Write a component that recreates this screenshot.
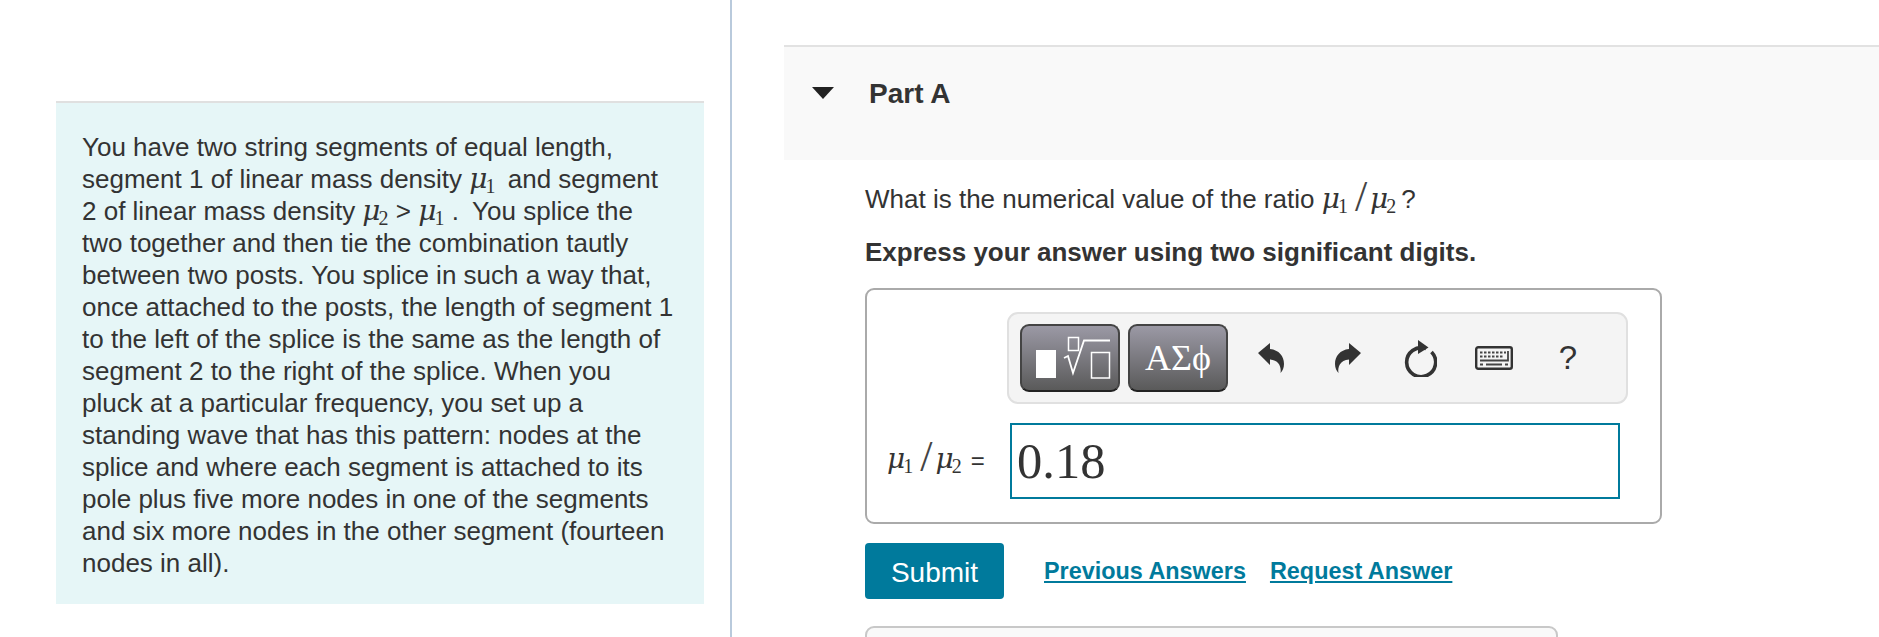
<div class="page">
  <aside class="left">
    <div class="intro">
      <p class="intro-text">You have two string segments of equal length,<br />segment 1 of linear mass density <span class="m after"><i>μ</i><sub>1</sub></span> and segment<br />2 of linear mass density <span class="m"><i>μ</i><sub>2</sub></span> &gt; <span class="m"><i>μ</i><sub>1</sub></span> . <span class="after-dot">You splice the</span><br />two together and then tie the combination tautly<br />between two posts. You splice in such a way that,<br />once attached to the posts, the length of segment 1<br />to the left of the splice is the same as the length of<br />segment 2 to the right of the splice. When you<br />pluck at a particular frequency, you set up a<br />standing wave that has this pattern: nodes at the<br />splice and where each segment is attached to its<br />pole plus five more nodes in one of the segments<br />and six more nodes in the other segment (fourteen<br />nodes in all).</p>
    </div>
  </aside>

  <main class="right">
    <header class="part">
      <svg class="caret" viewBox="0 0 22 12" width="22" height="12"><path d="M0 0H22L11 12Z" fill="#222" /></svg>
      <h2>Part A</h2>
    </header>
    <div class="body">
      <p class="q">What is the numerical value of the ratio <span class="m"><i>μ</i><sub>1</sub><span class="slash">/</span><i>μ</i><sub>2</sub></span><span class="qm">?</span></p>
      <p class="ex">Express your answer using two significant digits.</p>

      <section class="answer">
        <div class="toolbar">
          <button class="tpl" aria-label="templates">
            <svg viewBox="0 0 96 64" width="96" height="64" fill="none" stroke="#fff" stroke-width="1.500">
              <rect x="14" y="24" width="20" height="28" fill="#fff" stroke="none" />
              <rect x="46.500" y="11.500" width="10" height="13" />
              <path d="M42 32l4 -2 5 17 11 -32.500H88" stroke-width="1.800" />
              <rect x="69.500" y="26.500" width="18" height="25.500" />
            </svg>
          </button>
          <button class="tpl sym">ΑΣϕ</button>
          <span class="tool t1">
            <svg viewBox="0 0 28 32" width="28" height="32"><path d="M1 11L13 1V7C22 8 27 14 27 22C27 26 25.500 29 23.500 31C24.500 25 22 18 13 17.500V23Z" fill="#333" /></svg>
          </span>
          <span class="tool t2">
            <svg viewBox="0 0 28 32" width="28" height="32"><path d="M27 11L15 1V7C6 8 1 14 1 22C1 26 2.500 29 4.500 31C3.500 25 6 18 15 17.500V23Z" fill="#333" /></svg>
          </span>
          <span class="tool t3">
            <svg viewBox="0 0 34 38" width="34" height="38"><path d="M23 9.500A14.500 14.500 0 1 0 28.500 13" fill="none" stroke="#333" stroke-width="3.600" /><path d="M15 1L25.500 8.500L15 15Z" fill="#333" /></svg>
          </span>
          <span class="tool t4">
            <svg viewBox="0 0 38 24" width="38" height="24">
              <rect x="1.200" y="1.200" width="35.600" height="21.600" rx="2" fill="#f4f4f4" stroke="#333" stroke-width="2.400" />
              <path d="M5 6.500h26M5 10.500h24" fill="none" stroke="#444" stroke-width="1.800" stroke-dasharray="2.500 1.500" />
              <path d="M33 5v9.500H5" fill="none" stroke="#444" stroke-width="1.800" />
              <path d="M5 18.500h3M11 18.500h16M30 18.500h3" fill="none" stroke="#444" stroke-width="2" />
            </svg>
          </span>
          <span class="tool help">?</span>
        </div>
        <div class="row">
          <span class="label"><span class="m big"><i>μ</i><sub>1</sub><span class="slash">/</span><i>μ</i><sub>2</sub></span><span class="eq">=</span></span>
          <div class="input">0.18</div>
        </div>
      </section>

      <div class="actions">
        <button class="submit">Submit</button>
        <a href="#a">Previous Answers</a>
        <a href="#b">Request Answer</a>
      </div>

      <div class="next"></div>
    </div>
  </main>
</div>

<style>
  :global(body) { margin: 0; background: #fff; }
  .page {
    display: flex;
    height: 637px;
    overflow: hidden;
    font-family: "Liberation Sans", Arial, sans-serif;
    color: #333;
  }
  .left {
    box-sizing: border-box;
    flex: 0 0 732px;
    padding: 101px 26px 0 56px;
    border-right: 2px solid #b9cadc;
  }
  .intro {
    box-sizing: border-box;
    height: 503px;
    background: #e6f6f7;
    border-top: 2px solid #e0e0e0;
    padding: 28px 0 0 26px;
  }
  .intro-text { margin: 0; font-size: 26px; line-height: 32px; white-space: nowrap; }
  .m { font-family: "DejaVu Serif", serif; font-size: 28px; line-height: 0; white-space: nowrap; }
  .m i { font-style: italic; }
  .m sub { font-family: "Liberation Serif", serif; font-size: 20px; line-height: 0; vertical-align: -5px; margin-left: -2px; }
  .after { margin-right: 5px; }
  .after-dot { margin-left: 6px; }
  .slash { font-family: "Liberation Serif", serif; font-weight: 400; font-size: 44px; line-height: 0; vertical-align: -3px; margin: 0 3px 0 7px; color: #444; }
  .qm { margin-left: 5px; }
  .right { flex: 1; padding: 45px 0 0 52px; min-width: 0; }
  .part {
    box-sizing: border-box;
    height: 115px;
    background: #f9f9f9;
    border-top: 2px solid #e2e2e2;
    display: flex;
    align-items: flex-start;
    padding: 40px 0 0 28px;
  }
  .caret { margin-right: 35px; }
  h2 { margin: -11px 0 0; font-size: 28px; line-height: 36px; font-weight: 700; color: #333; }
  .body { padding-left: 81px; }
  .q { margin: 23px 0 0; font-size: 26px; line-height: 32px; white-space: nowrap; }
  .ex { margin: 21px 0 0; font-size: 26px; line-height: 32px; font-weight: 700; white-space: nowrap; }
  .answer {
    box-sizing: border-box;
    width: 797px;
    height: 236px;
    margin-top: 20px;
    border: 2px solid #aaa;
    border-radius: 9px;
    padding: 22px 32px 0 20px;
  }
  .toolbar {
    box-sizing: border-box;
    height: 92px;
    margin-left: 120px;
    background: #f4f4f4;
    border: 2px solid #e0e0e0;
    border-radius: 11px;
    display: flex;
    align-items: center;
    padding-left: 11px;
  }
  .tpl {
    box-sizing: border-box;
    flex: none;
    width: 100px;
    height: 68px;
    border: 2px solid #444;
    border-bottom-color: #222;
    border-radius: 9px;
    background: linear-gradient(#9b99a5, #5a5a5a);
    padding: 0;
    margin: 0 8px 0 0;
    display: flex;
    align-items: center;
    justify-content: center;
  }
  .sym { color: #fff; font-family: "Liberation Serif", serif; font-size: 36px; }
  .tool { flex: none; display: flex; align-items: center; justify-content: center; width: 40px; height: 40px; }
  .t1 { margin-left: 15px; }
  .t2 { margin-left: 37px; }
  .t3 { margin-left: 32px; }
  .t4 { margin-left: 34px; }
  .help { margin-left: 34px; font-size: 33px; color: #333; }
  .row { display: flex; align-items: center; margin-top: 19px; }
  .label { flex: none; width: 123px; white-space: nowrap; display: flex; align-items: center; }
  .eq { font-family: "Liberation Sans", sans-serif; font-size: 24px; margin-left: 9px; }
  .input {
    box-sizing: border-box;
    flex: none;
    width: 610px;
    height: 76px;
    border: 2px solid #007a9c;
    padding-left: 5px;
    font-family: "Liberation Serif", serif;
    font-size: 50.500px;
    line-height: 72px;
    color: #333;
  }
  .actions { display: flex; align-items: center; margin-top: 19px; height: 56px; }
  .submit {
    box-sizing: border-box;
    flex: none;
    width: 139px;
    height: 56px;
    background: #007a9c;
    border: 0;
    border-radius: 4px;
    color: #fff;
    font-family: inherit;
    font-size: 28px;
    margin-right: 40px;
    padding: 3px 0 0;
  }
  a { color: #007a9c; font-weight: 700; font-size: 23.400px; margin-right: 24px; }
  .next {
    box-sizing: border-box;
    width: 693px;
    height: 60px;
    margin-top: 27px;
    background: #f9f9f9;
    border: 2px solid #c8c8c8;
    border-radius: 9px;
  }
</style>
